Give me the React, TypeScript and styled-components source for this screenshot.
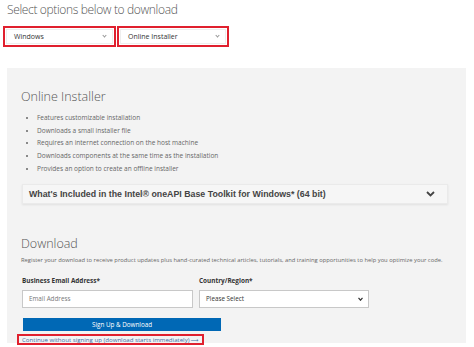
import React from 'react'
import styled, { createGlobalStyle } from 'styled-components'

const GlobalStyle = createGlobalStyle`
  html, body {
    margin: 0;
    padding: 0;
    background: #ffffff;
  }
  body {
    font-family: 'Open Sans', 'Liberation Sans', sans-serif;
    color: #555;
  }
`

const Page = styled.div`
  width: 474px;
  height: 347px;
  overflow: hidden;
  padding: 2px 0 0 3px;
  box-sizing: border-box;
`

const Title = styled.h1`
  margin: 0 0 0 4px;
  font-size: 12px;
  line-height: 16px;
  font-weight: 300;
  color: #555;
  letter-spacing: -0.35px;
`

const SelectRow = styled.div`
  display: flex;
  gap: 1px;
  margin-top: 8px;
`

const Highlight = styled.div<{ $width: number }>`
  width: ${(p) => p.$width}px;
  height: 21px;
  box-sizing: border-box;
  border: 2px solid #e0202e;
  padding: 1px;
  display: flex;
`

const Dropdown = styled.div`
  flex: 1;
  display: flex;
  align-items: center;
  justify-content: space-between;
  padding: 0 6px 0 7px;
  background: #fff;
  border: 1px solid #eee;
  font-size: 7px;
  color: #333;
`

const Chevron = styled.span`
  width: 2px;
  height: 2px;
  border-right: 1px solid #999;
  border-bottom: 1px solid #999;
  transform: rotate(45deg);
  margin-top: -2px;
`

const Panel = styled.section`
  margin: 21px 0 0 4px;
  width: 459px;
  height: 275px;
  background: #f3f3f3;
  padding: 21px 18px 0 14px;
  box-sizing: border-box;
`

const Heading = styled.h2<{ $top?: number }>`
  margin: ${(p) => p.$top ?? 0}px 0 0 0;
  font-size: 12.5px;
  line-height: 16px;
  font-weight: 300;
  color: #555;
`

const Bullets = styled.ul`
  margin: 7px 0 0 0;
  padding: 0 0 0 16px;
  font-size: 6.5px;
  line-height: 12.7px;
  color: #666;
  list-style: disc;
`

const Accordion = styled.div`
  margin: 8px 0 0 1px;
  height: 20px;
  box-sizing: border-box;
  background: #f6f6f6;
  border: 1px solid #eaeaea;
  box-shadow: 0 1px 2px rgba(0, 0, 0, 0.08);
  display: flex;
  align-items: center;
  justify-content: space-between;
  padding: 0 12px 0 6px;
`

const AccordionTitle = styled.span`
  font-family: 'Liberation Sans', Arial, sans-serif;
  font-weight: 700;
  font-size: 8.8px;
  color: #444;
`

const Intro = styled.p`
  margin: 3px 0 0 0;
  font-size: 5.8px;
  line-height: 10px;
  color: #666;
  white-space: nowrap;
`

const FormRow = styled.div`
  display: grid;
  grid-template-columns: 171px 170px;
  column-gap: 6px;
  margin: 11px 0 0 1px;
`

const Field = styled.div`
  display: flex;
  flex-direction: column;
  gap: 5px;
`

const Label = styled.label`
  font-size: 6.4px;
  line-height: 9px;
  font-weight: 700;
  color: #333;
`

const Input = styled.div`
  height: 18px;
  box-sizing: border-box;
  background: #fff;
  border: 1px solid #c8c8c8;
  display: flex;
  align-items: center;
  justify-content: space-between;
  padding: 0 5px 0 6px;
  font-size: 6.3px;
  color: #777;
`

const SelectText = styled.span`
  color: #333;
`

const SelectArrow = styled.svg`
  width: 5px;
  height: 4px;
`

const Button = styled.button`
  margin: 10px 0 0 2px;
  width: 198px;
  height: 13px;
  border: none;
  background: #0068b5;
  color: #fff;
  font-family: 'Open Sans', sans-serif;
  font-size: 6.3px;
  padding: 0;
  display: block;
`

const LinkBox = styled.div`
  margin: 3px 0 0 -4px;
  width: 187px;
  height: 11px;
  box-sizing: border-box;
  border: 2px solid #e0202e;
  display: flex;
  align-items: center;
  padding-left: 3px;
`

const Link = styled.a`
  font-size: 6.1px;
  color: #3b6ea5;
  text-decoration: none;
  white-space: nowrap;
`

const Arrow = styled.span`
  font-family: 'DejaVu Sans', sans-serif;
  font-size: 5.5px;
  margin-left: 1px;
`

const features = [
  'Features customizable installation',
  'Downloads a small installer file',
  'Requires an internet connection on the host machine',
  'Downloads components at the same time as the installation',
  'Provides an option to create an offline installer',
]

export default function App() {
  return (
    <>
      <GlobalStyle />
      <Page>
        <Title>Select options below to download</Title>
        <SelectRow>
          <Highlight $width={113}>
            <Dropdown>
              Windows
              <Chevron />
            </Dropdown>
          </Highlight>
          <Highlight $width={112}>
            <Dropdown>
              Online Installer
              <Chevron />
            </Dropdown>
          </Highlight>
        </SelectRow>
        <Panel>
          <Heading>Online Installer</Heading>
          <Bullets>
            {features.map((f) => (
              <li key={f}>{f}</li>
            ))}
          </Bullets>
          <Accordion>
            <AccordionTitle>
              What's Included in the Intel® oneAPI Base Toolkit for Windows* (64 bit)
            </AccordionTitle>
            <svg width="9" height="6" viewBox="0 0 9 6">
              <path d="M1 1 L4.5 4.5 L8 1" fill="none" stroke="#444" strokeWidth="1.8" />
            </svg>
          </Accordion>
          <Heading $top={32}>Download</Heading>
          <Intro>
            Register your download to receive product updates plus hand-curated technical articles,
            tutorials, and training opportunities to help you optimize your code.
          </Intro>
          <FormRow>
            <Field>
              <Label>Business Email Address*</Label>
              <Input>Email Address</Input>
            </Field>
            <Field>
              <Label>Country/Region*</Label>
              <Input>
                <SelectText>Please Select</SelectText>
                <SelectArrow viewBox="0 0 5 4">
                  <path d="M0.5 0.8 L2.5 3.2 L4.5 0.8" fill="none" stroke="#333" strokeWidth="1.2" />
                </SelectArrow>
              </Input>
            </Field>
          </FormRow>
          <Button>Sign Up &amp; Download</Button>
          <LinkBox>
            <Link href="#">
              Continue without signing up (download starts immediately)<Arrow>⟶</Arrow>
            </Link>
          </LinkBox>
        </Panel>
      </Page>
    </>
  )
}
